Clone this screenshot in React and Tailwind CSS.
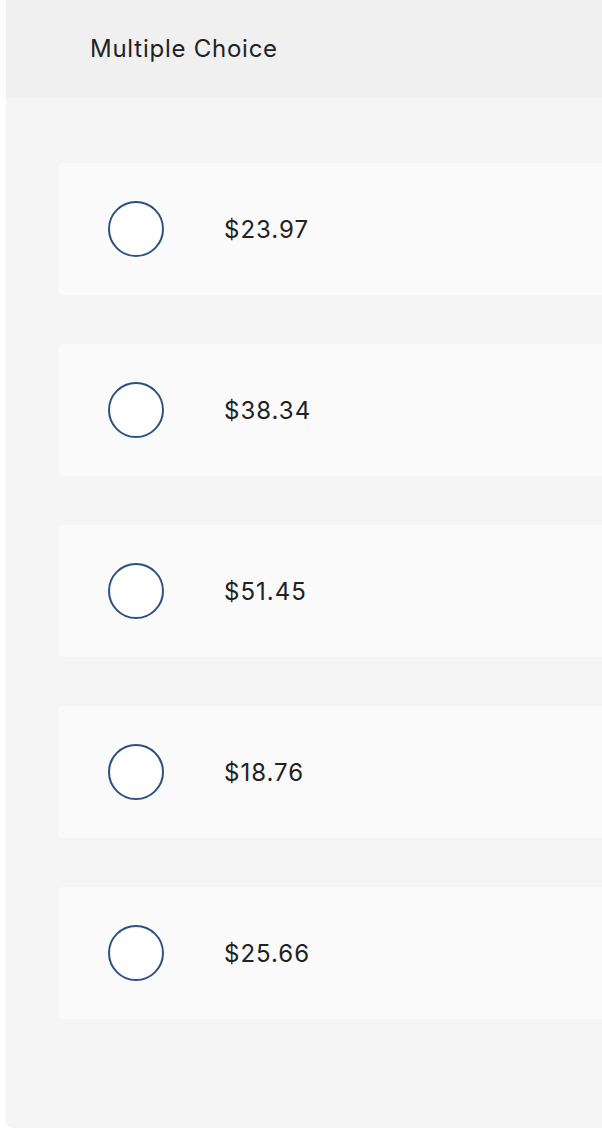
import React from 'react'

const options = ['$23.97', '$38.34', '$51.45', '$18.76', '$25.66']

function Option({ label }) {
  return (
    <label className="flex items-center h-[132px] rounded-l-[5px] bg-[#fafafa] pl-[50px] cursor-pointer">
      <span className="block w-[56px] h-[56px] rounded-full border-2 border-[#2c5282] bg-white shrink-0" />
      <span className="ml-[60px] mt-[2px] text-[24px] tracking-[1px] text-[#222]">{label}</span>
    </label>
  )
}

export default function App() {
  return (
    <div className="w-[602px] h-[1128px] overflow-hidden bg-white" style={{ fontFamily: 'Inter, Lato, sans-serif' }}>
      <div className="ml-[6px] w-[640px] h-[1128px] rounded-b-[6px] overflow-hidden bg-[#f5f5f5] flex flex-col">
        <header className="h-[98px] bg-[#f0f0f0] flex items-center pl-[84px]">
          <h2 className="text-[24px] tracking-[0.75px] text-[#222]">Multiple Choice</h2>
        </header>
        <div className="flex flex-col gap-[49px] pl-[52px] pt-[65px]">
          {options.map(o => (
            <Option key={o} label={o} />
          ))}
        </div>
      </div>
    </div>
  )
}
